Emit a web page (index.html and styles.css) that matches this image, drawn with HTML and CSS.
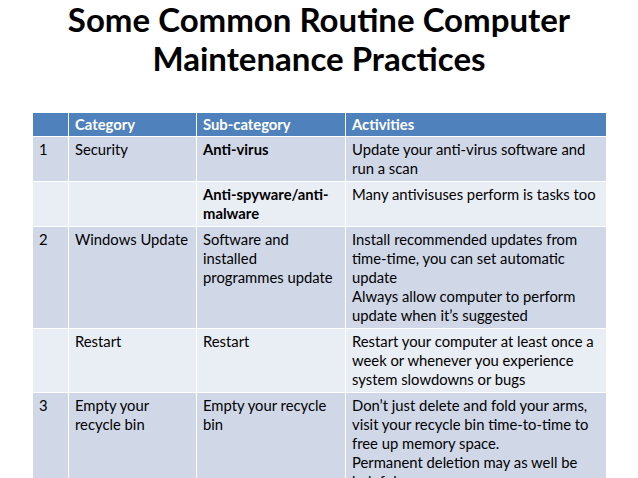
FILE: index.html
```html
<!DOCTYPE html>
<html>
<head>
<meta charset="utf-8">
<link rel="stylesheet" href="styles.css">
</head>
<body>
<div class="slide">
  <h1 class="title">Some Common Routine Computer<br>Maintenance Practices</h1>
  <table class="grid">
    <colgroup>
      <col class="c-num"><col class="c-cat"><col class="c-sub"><col class="c-act">
    </colgroup>
    <thead>
      <tr class="head"><th></th><th>Category</th><th>Sub-category</th><th>Activities</th></tr>
    </thead>
    <tbody>
      <tr class="odd"><td>1</td><td>Security</td><td class="b">Anti-virus</td><td>Update your anti-virus software and<br>run a scan</td></tr>
      <tr class="even"><td></td><td></td><td class="b">Anti-spyware/anti-<br>malware</td><td>Many antivisuses perform is tasks too</td></tr>
      <tr class="odd"><td>2</td><td>Windows Update</td><td>Software and<br>installed<br>programmes update</td><td>Install recommended updates from<br>time-time, you can set automatic<br>update<br>Always allow computer to perform<br>update when it’s suggested</td></tr>
      <tr class="even"><td></td><td>Restart</td><td>Restart</td><td>Restart your computer at least once a<br>week or whenever you experience<br>system slowdowns or bugs</td></tr>
      <tr class="odd"><td>3</td><td>Empty your<br>recycle bin</td><td>Empty your recycle<br>bin</td><td>Don’t just delete and fold your arms,<br>visit your recycle bin time-to-time to<br>free up memory space.<br>Permanent deletion may as well be<br>helpful</td></tr>
    </tbody>
  </table>
</div>
</body>
</html>
```
FILE: styles.css
```css
html, body {
  margin: 0;
  padding: 0;
  background: #ffffff;
  overflow: hidden;
}
.slide {
  width: 638px;
  height: 478px;
  overflow: hidden;
  font-family: Lato, "Liberation Sans", sans-serif;
}
.title {
  margin: 0;
  text-align: center;
  font-size: 33px;
  line-height: 39px;
  font-weight: bold;
  color: #000;
}
.grid {
  margin: 34px 0 0 32px;
  width: 574px;
  table-layout: fixed;
  border-collapse: collapse;
  font-size: 14.8px;
  line-height: 19px;
  color: #000;
}
.c-num { width: 36px; }
.c-cat { width: 128px; }
.c-sub { width: 149px; }
.c-act { width: 261px; }
.grid th, .grid td {
  border: 1px solid #ffffff;
  padding: 3px 6px 3px 6px;
  text-align: left;
  vertical-align: top;
  white-space: nowrap;
}
.head th {
  background: #4f81bd;
  color: #ffffff;
  font-weight: bold;
  padding-top: 2px;
  padding-bottom: 2px;
}
.odd td { background: #d0d8e8; }
.even td { background: #e9edf4; }
.b { font-weight: bold; }
```
